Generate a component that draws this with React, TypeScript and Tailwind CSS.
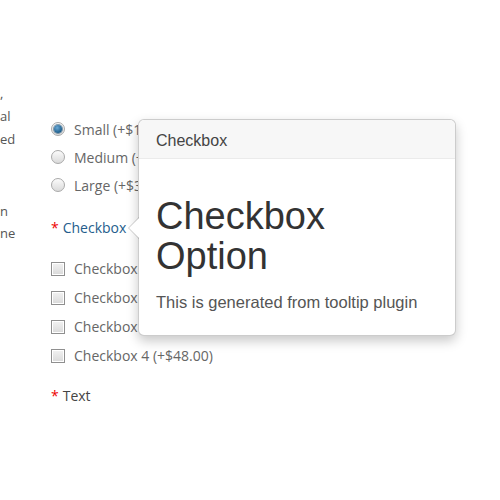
import React from "react";

// Product options form with a Bootstrap-style popover opened on the "Checkbox" label.

const sans = "font-['Open_Sans','Liberation_Sans',sans-serif]";
const arial = "font-['Liberation_Sans',Arial,sans-serif]";

function Radio({ checked = false }: { checked?: boolean }) {
  return (
    <span className="flex size-[14px] shrink-0 items-center justify-center rounded-full border border-[#a9a9a9] bg-gradient-to-b from-[#fbfbfb] to-[#dadada]">
      {checked && (
        <span className="size-[8px] rounded-full bg-[radial-gradient(circle_at_40%_35%,#6aa9d6,#1d5e8c_70%)] ring-1 ring-[#0f3f63]/50" />
      )}
    </span>
  );
}

function Box() {
  return (
    <span className="size-[14px] shrink-0 border border-[#8f8f8f] bg-gradient-to-b from-[#f2f2f2] to-[#d9d9d9] shadow-[inset_0_0_0_1px_#fff]" />
  );
}

function Row({
  children,
  h = "h-[28px]",
}: {
  children: React.ReactNode;
  h?: string;
}) {
  return <div className={`flex items-center gap-[9px] ${h}`}>{children}</div>;
}

function Popover() {
  return (
    <div className="absolute left-[138px] top-[119px] w-[318px] rounded-[6px] border border-black/20 bg-white shadow-[0_5px_12px_rgba(0,0,0,0.22)]">
      {/* arrow */}
      <span className="absolute left-[-11px] top-[97px] size-0 border-y-[11px] border-r-[11px] border-y-transparent border-r-black/20" />
      <span className="absolute left-[-10px] top-[98px] size-0 border-y-[10px] border-r-[10px] border-y-transparent border-r-white" />
      <div
        className={`${arial} rounded-t-[6px] border-b border-[#ebebeb] bg-[#f7f7f7] px-[17px] pt-[11px] pb-[7px] text-[16px] leading-[20px] text-[#444]`}
      >
        Checkbox
      </div>
      <div className={`${arial} px-[17px] pt-[37px] pb-[22px]`}>
        <h1 className="text-[38px] leading-[40px] text-[#333]">
          Checkbox
          <br />
          Option
        </h1>
        <p className="mt-[15px] text-[16.5px] leading-[22px] text-[#555]">
          This is generated from tooltip plugin
        </p>
      </div>
    </div>
  );
}

export default function App() {
  return (
    <div className={`${sans} relative flex h-[500px] w-[500px] overflow-hidden bg-white text-[14px] text-[#666]`}>
      <div className="w-[51px] shrink-0 pt-[82px] text-[13px]">
        <div className="leading-[23px] text-[#555]">
          <div>,</div>
          <div>al</div>
          <div>ed</div>
        </div>
        <div className="mt-[49px] leading-[22px] text-[#555]">
          <div>n</div>
          <div>ne</div>
        </div>
      </div>

      <div className="flex flex-col pt-[115px]">
        <Row>
          <Radio checked />
          <span>Small (+$10.00)</span>
        </Row>
        <Row>
          <Radio />
          <span>Medium (+$20.00)</span>
        </Row>
        <Row>
          <Radio />
          <span>Large (+$30.00)</span>
        </Row>

        <div className="mt-[14px] flex h-[28px] items-center gap-[4px]">
          <span className="text-[#e00]">*</span>
          <span className="text-[#245d8c]">Checkbox</span>
        </div>

        <div className="mt-[13px] flex flex-col">
          <Row h="h-[29px]">
            <Box />
            <span>Checkbox 1 (+$12.00)</span>
          </Row>
          <Row h="h-[29px]">
            <Box />
            <span>Checkbox 2 (+$24.00)</span>
          </Row>
          <Row h="h-[29px]">
            <Box />
            <span>Checkbox 3 (+$36.00)</span>
          </Row>
          <Row h="h-[29px]">
            <Box />
            <span>Checkbox 4 (+$48.00)</span>
          </Row>
        </div>

        <div className="mt-[11px] flex h-[28px] items-center gap-[4px]">
          <span className="text-[#e00]">*</span>
          <span className="text-[#444]">Text</span>
        </div>
      </div>

      <Popover />
    </div>
  );
}
